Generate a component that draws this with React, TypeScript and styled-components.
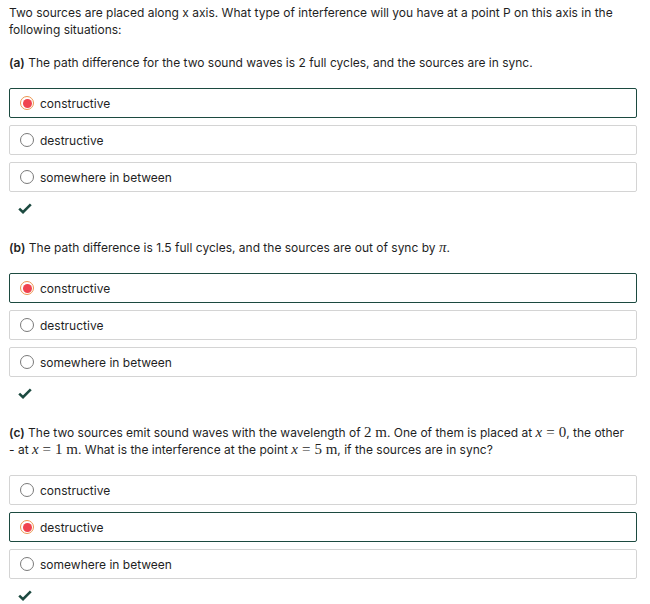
import React from "react";
import styled, { createGlobalStyle } from "styled-components";

const GlobalStyle = createGlobalStyle`
  body {
    margin: 0;
    background: #ffffff;
    font-family: Inter, "Noto Sans", sans-serif;
    color: #1f1f1f;
  }
`;

const Page = styled.div`
  width: 628px;
  padding: 4px 0 0 9px;
  font-size: 12px;
  line-height: 17px;
`;

const Intro = styled.p`
  margin: 0;
`;

const Section = styled.section`
  margin-top: 16px;

  & + & {
    margin-top: 25px;
  }
`;

const Prompt = styled.p`
  margin: 0;
`;

const Label = styled.b`
  font-weight: 600;
`;

const NoWrap = styled.span`
  white-space: nowrap;
`;

const Math = styled.span`
  font-family: "Liberation Serif", "DejaVu Serif", serif;
  font-size: 15px;
  line-height: 1;
`;

const MathVar = styled(Math)`
  font-style: italic;
`;

const Eq = styled(Math)`
  margin: 0 4px;
`;

const Options = styled.div`
  margin-top: 17px;
  display: flex;
  flex-direction: column;
  gap: 7px;
`;

const Option = styled.div<{ $selected?: boolean }>`
  height: 30px;
  box-sizing: border-box;
  display: flex;
  align-items: center;
  gap: 6px;
  padding-left: 10px;
  border: 1px solid ${(p) => (p.$selected ? "#1c4a40" : "#d4d4d4")};
  border-radius: 2px;
`;

const Radio = styled.span<{ $selected?: boolean }>`
  width: 14px;
  height: 14px;
  box-sizing: border-box;
  border-radius: 50%;
  border: 1px solid ${(p) => (p.$selected ? "#ec9650" : "#7a7a7a")};
  display: flex;
  align-items: center;
  justify-content: center;
  flex-shrink: 0;

  &::after {
    content: "";
    display: ${(p) => (p.$selected ? "block" : "none")};
    width: 9px;
    height: 9px;
    border-radius: 50%;
    background: #f0434f;
  }
`;

const CheckRow = styled.div`
  margin-top: 10px;
  height: 12px;
  padding-left: 9px;
  display: flex;
  align-items: center;
`;

const Check = () => (
  <svg width="14" height="11" viewBox="0 0 14 11">
    <path
      d="M1.2 5.6 L5 9.2 L12.8 1.4"
      fill="none"
      stroke="#1c4a40"
      strokeWidth="2.6"
      strokeLinejoin="miter"
    />
  </svg>
);

type Question = {
  prompt: React.ReactNode;
  selected: number;
};

const choices = ["constructive", "destructive", "somewhere in between"];

const questions: Question[] = [
  {
    prompt: (
      <>
        <Label>(a)</Label> The path difference for the two sound waves is 2 full cycles, and the
        sources are in sync.
      </>
    ),
    selected: 0,
  },
  {
    prompt: (
      <>
        <Label>(b)</Label> The path difference is 1.5 full cycles, and the sources are out of sync
        by <MathVar>π</MathVar>.
      </>
    ),
    selected: 0,
  },
  {
    prompt: (
      <>
        <Label>(c)</Label> The two sources emit sound waves with the wavelength of{" "}
        <Math>2 m</Math>. One of them is placed at <MathVar>x</MathVar>
        <Eq>=</Eq>
        <Math>0</Math>, the other <NoWrap>- at</NoWrap> <MathVar>x</MathVar>
        <Eq>=</Eq>
        <Math>1 m</Math>. What is the interference at the point <MathVar>x</MathVar>
        <Eq>=</Eq>
        <Math>5 m</Math>, if the sources are in sync?
      </>
    ),
    selected: 1,
  },
];

const App: React.FC = () => (
  <>
    <GlobalStyle />
    <Page>
      <Intro>
        Two sources are placed along x axis. What type of interference will you have at a point P
        on this axis in the following situations:
      </Intro>
      {questions.map((q, i) => (
        <Section key={i}>
          <Prompt>{q.prompt}</Prompt>
          <Options>
            {choices.map((c, j) => (
              <Option key={c} $selected={j === q.selected}>
                <Radio $selected={j === q.selected} />
                {c}
              </Option>
            ))}
          </Options>
          <CheckRow>
            <Check />
          </CheckRow>
        </Section>
      ))}
    </Page>
  </>
);

export default App;
